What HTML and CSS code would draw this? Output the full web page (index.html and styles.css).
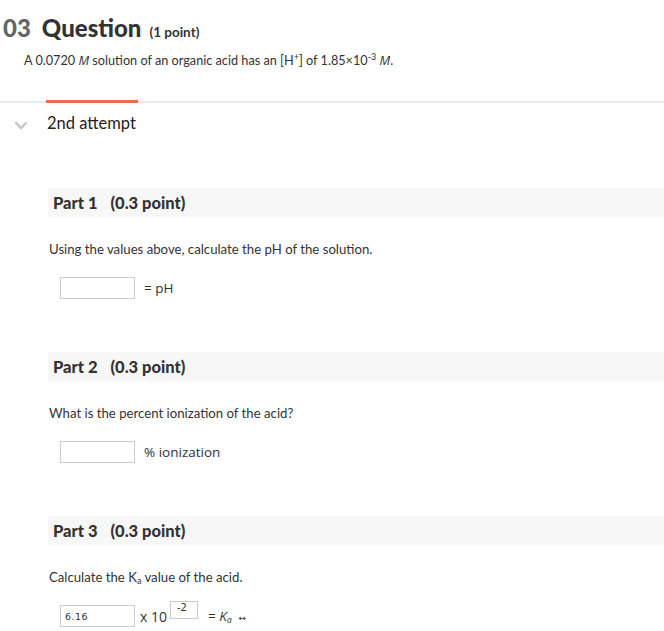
FILE: index.html
```html
<!DOCTYPE html>
<html>
<head>
<meta charset="utf-8">
<link rel="stylesheet" href="styles.css">
</head>
<body>
<div class="page">
  <h1 class="q-title"><span class="q-num">03</span><span class="q-word">Question</span><span class="q-points">(1 point)</span></h1>
  <p class="q-stem">A 0.0720 <i class="unit">M</i> solution of an organic acid has an [H<sup>+</sup>] of 1.85×10<sup>-3</sup> <i class="unit">M</i>.</p>

  <div class="tabs"><div class="tab-active"></div></div>

  <div class="attempt">
    <svg class="chev" width="12" height="8" viewBox="0 0 12 8"><polyline points="1.2,1.2 6,6 10.8,1.2" fill="none" stroke="#c9c9c9" stroke-width="2.6" stroke-linecap="round" stroke-linejoin="round"/></svg>
    <span class="attempt-label">2nd attempt</span>
  </div>

  <section class="part">
    <h2 class="part-head"><span class="part-name">Part 1</span><span class="part-pts">(0.3 point)</span></h2>
    <p class="part-q">Using the values above, calculate the pH of the solution.</p>
    <div class="answer">
      <span class="box"></span>
      <span class="label">= pH</span>
    </div>
  </section>

  <section class="part">
    <h2 class="part-head"><span class="part-name">Part 2</span><span class="part-pts">(0.3 point)</span></h2>
    <p class="part-q">What is the percent ionization of the acid?</p>
    <div class="answer">
      <span class="box"></span>
      <span class="label">% ionization</span>
    </div>
  </section>

  <section class="part">
    <h2 class="part-head"><span class="part-name">Part 3</span><span class="part-pts">(0.3 point)</span></h2>
    <p class="part-q">Calculate the K<sub>a</sub> value of the acid.</p>
    <div class="answer">
      <span class="box filled">6.16</span>
      <span class="times">x 10</span>
      <span class="expbox">-2</span>
      <span class="label ka">= <i>K</i><sub class="ka-sub">a</sub> <span class="arrow">↔</span></span>
    </div>
  </section>
</div>
</body>
</html>
```
FILE: styles.css
```css
html, body {
  margin: 0;
  padding: 0;
  background: #ffffff;
}

body {
  font-family: Lato, "Noto Sans", sans-serif;
  color: #333333;
}

.page {
  width: 664px;
  overflow: hidden;
}

.q-title {
  display: flex;
  align-items: baseline;
  margin: 13px 0 0 3px;
  font-size: 24px;
  line-height: 29px;
  font-weight: 900;
  color: #333333;
}

.q-num {
  color: #666666;
  margin-right: 11px;
}

.q-points {
  font-size: 13.5px;
  line-height: 14px;
  font-weight: 700;
  margin-left: 8px;
}

.q-stem {
  margin: 9px 0 0 24px;
  font-size: 12.7px;
  line-height: 18px;
}

.unit {
  font-family: "Open Sans", sans-serif;
  font-size: 12.7px;
  font-weight: 400;
}

sup {
  font-size: 9px;
  line-height: 0;
  vertical-align: 5px;
}

sub {
  font-size: 9px;
  line-height: 0;
  vertical-align: -2px;
}

.tabs {
  margin-top: 31px;
  height: 3px;
  padding-top: 1px;
  box-sizing: border-box;
  background: #ececec;
  background-clip: content-box;
}

.tab-active {
  margin-top: -1px;
  margin-left: 46px;
  width: 92px;
  height: 3px;
  background: #f26b47;
}

.attempt {
  display: flex;
  align-items: center;
  margin-top: 10px;
  padding-left: 15px;
  height: 20px;
}

.chev {
  display: block;
  margin-top: 6px;
}

.attempt-label {
  margin-left: 20px;
  font-size: 16.5px;
  line-height: 20px;
  font-weight: 400;
  color: #222222;
}

.part {
  margin-left: 48px;
  padding-bottom: 53px;
}

.attempt + .part {
  margin-top: 55px;
}

.part-head {
  margin: 0;
  height: 29px;
  display: flex;
  align-items: center;
  padding-left: 5px;
  background: #f7f7f7;
  font-size: 16.5px;
  font-weight: 900;
  color: #333333;
}

.part-pts {
  margin-left: 13px;
}

.part-q {
  margin: 23px 0 0 1px;
  font-size: 13.2px;
  line-height: 18px;
}

.answer {
  display: flex;
  align-items: center;
  margin-top: 19px;
  margin-left: 12px;
  height: 22px;
}

.box {
  width: 75px;
  height: 22px;
  box-sizing: border-box;
  border: 1px solid #cccccc;
  background: #ffffff;
}

.box.filled {
  font-family: "DejaVu Sans", sans-serif;
  font-size: 9.5px;
  letter-spacing: 0.5px;
  padding: 5px 0 0 4px;
  color: #333333;
}

.label {
  margin-left: 9px;
  font-family: "Open Sans", sans-serif;
  font-size: 13.5px;
  color: #333333;
}

.times {
  margin-left: 5px;
  font-family: "Open Sans", sans-serif;
  font-size: 14px;
  color: #333333;
}

.expbox {
  align-self: flex-start;
  margin-top: -4px;
  margin-left: 3px;
  width: 28px;
  height: 18px;
  box-sizing: border-box;
  border: 1px solid #cccccc;
  font-family: "DejaVu Sans", sans-serif;
  font-size: 10px;
  padding: 0 0 0 6px;
  color: #333333;
}

.label.ka {
  margin-left: 10px;
}

.label.ka i {
  font-family: "Open Sans", sans-serif;
}

.ka-sub {
  font-family: "Open Sans", sans-serif;
  font-style: italic;
  font-size: 9px;
}

.arrow {
  font-family: "DejaVu Sans", sans-serif;
  font-size: 9px;
  margin-left: 3px;
}
```
